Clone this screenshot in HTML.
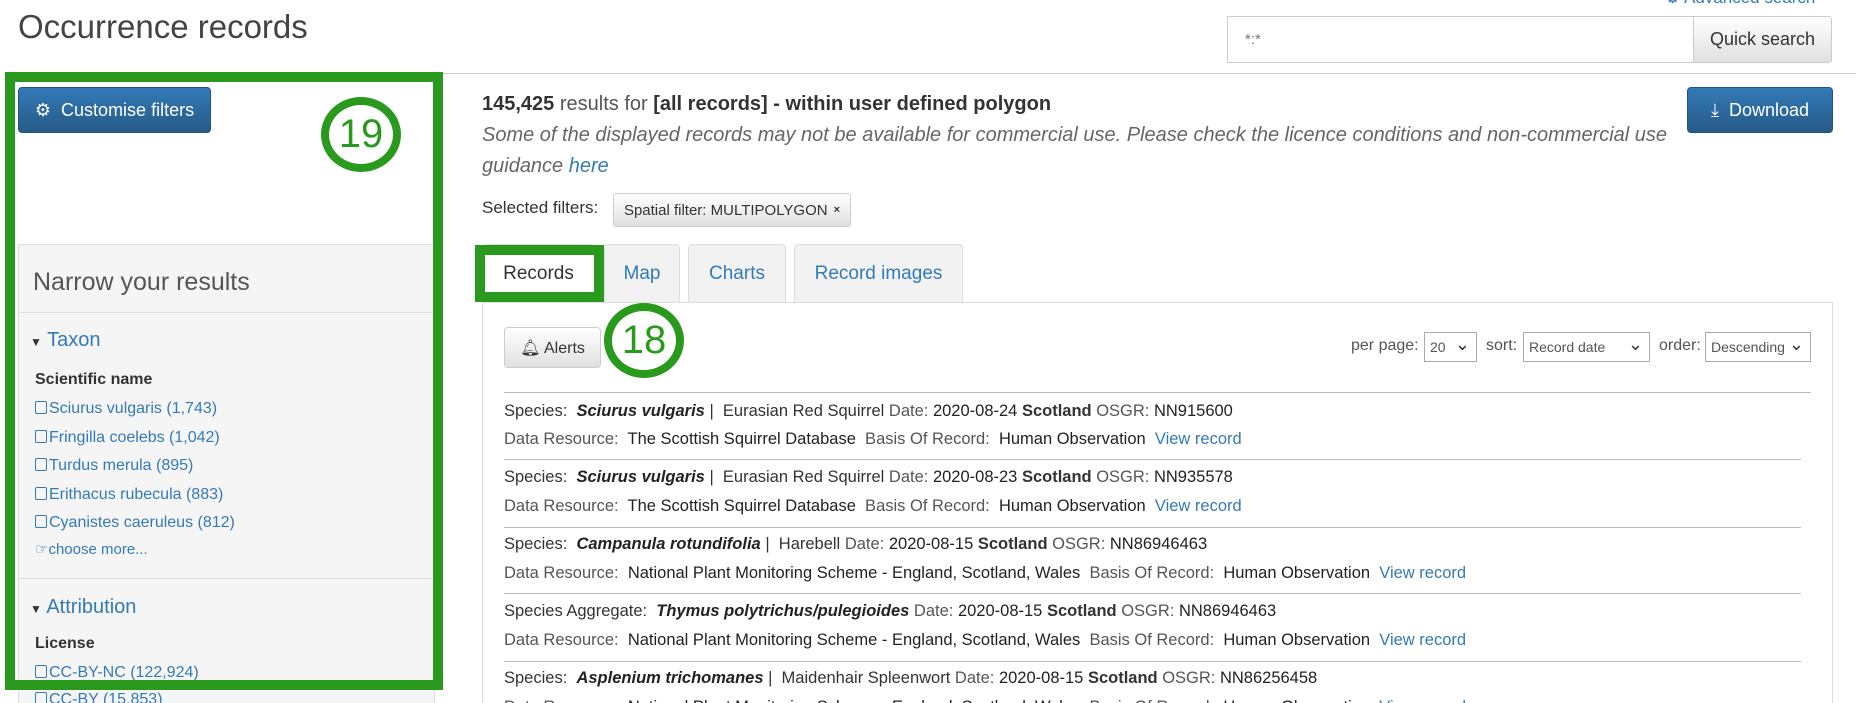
<!DOCTYPE html>
<html><head><meta charset="utf-8">
<style>
*{box-sizing:border-box;margin:0;padding:0}
html,body{width:1856px;height:703px;overflow:hidden;background:#fff}
body{font-family:"Liberation Sans",Arial,sans-serif;color:#333}
#w{position:relative;width:1856px;height:703px;overflow:hidden}
.a{position:absolute;white-space:nowrap}
.blue{color:#337ab7}
.btnb{position:absolute;background:linear-gradient(#337ab7,#265a88);border:1px solid #245580;border-radius:4px;color:#fff;font-size:18px;display:flex;align-items:center;justify-content:center}
.btng{position:absolute;background:linear-gradient(#fff,#e0e0e0);border:1px solid #ccc;border-radius:4px;color:#333;display:flex;align-items:center;justify-content:center}
.green{position:absolute;border:10px solid #2a9a1e}
.circ{position:absolute;border:8px solid #2a9a1e;border-radius:50%;color:#2a9a1e;display:flex;align-items:center;justify-content:center;font-size:40px;background:#fff}
.sel{position:absolute;border:1px solid #aaa;background:#fff;font-size:14px;color:#555;padding-left:5px;display:flex;align-items:center;top:332px;height:30px}
.sel:after{content:"⌄";position:absolute;right:6px;top:1px;font-size:18px;color:#333}
.hr{position:absolute;height:1px;background:#ccc}
.row{position:absolute;left:504px;font-size:16.5px;color:#555}
.row b{color:#333;font-weight:normal}
.row i{color:#222;font-weight:bold}
.row .d{color:#222}
.item{position:absolute;left:35px;font-size:16px;color:#337ab7}
.cb{display:inline-block;width:12px;height:13px;border:1.5px solid #337ab7;border-radius:2px;margin-right:2px;vertical-align:-1px}
.tab{position:absolute;top:244px;height:58px;border:1px solid #ddd;border-bottom:none;border-radius:4px 4px 0 0;background:#f2f2f2;color:#337ab7;font-size:19px;display:flex;align-items:center;justify-content:center}
</style></head><body><div id="w">
<div class="a" style="left:18px;top:8px;font-size:33px;color:#444">Occurrence records</div>
<div class="a blue" style="left:1665px;top:-12px;font-size:17px">⚙ Advanced search</div>
<div class="a" style="left:1227px;top:16px;width:467px;height:47px;border:1px solid #ccc;border-right:none;font-size:15px;color:#777;padding:14px 0 0 17px">*:*</div>
<div class="btng" style="left:1693px;top:16px;width:139px;height:47px;border-radius:0 3px 3px 0;font-size:18px">Quick search</div>
<div class="hr" style="left:443px;top:73px;width:1413px"></div>

<div class="btnb" style="left:18px;top:87px;width:193px;height:46px">⚙&nbsp; Customise filters</div>
<div class="a" style="left:18px;top:244px;width:417px;height:500px;background:#f5f5f5;border:1px solid #ddd"></div>
<div class="a" style="left:33px;top:268px;font-size:25px;color:#555">Narrow your results</div>
<div class="hr" style="left:18px;top:312px;width:417px;background:#ddd"></div>
<div class="a blue" style="left:30px;top:329px;font-size:20px"><span style="font-size:12px;color:#333">▼</span> Taxon</div>
<div class="a" style="left:35px;top:371px;font-size:16px;font-weight:bold;color:#333">Scientific name</div>
<div class="item" style="top:400px"><span class="cb"></span>Sciurus vulgaris (1,743)</div>
<div class="item" style="top:429px"><span class="cb"></span>Fringilla coelebs (1,042)</div>
<div class="item" style="top:457px"><span class="cb"></span>Turdus merula (895)</div>
<div class="item" style="top:486px"><span class="cb"></span>Erithacus rubecula (883)</div>
<div class="item" style="top:514px"><span class="cb"></span>Cyanistes caeruleus (812)</div>
<div class="item" style="top:540px;font-size:15px">☞choose more...</div>
<div class="hr" style="left:18px;top:578px;width:417px;background:#ddd"></div>
<div class="a blue" style="left:30px;top:596px;font-size:20px"><span style="font-size:12px;color:#333">▼</span> Attribution</div>
<div class="a" style="left:35px;top:635px;font-size:16px;font-weight:bold;color:#333">License</div>
<div class="item" style="top:664px"><span class="cb"></span>CC-BY-NC (122,924)</div>
<div class="item" style="top:691px"><span class="cb"></span>CC-BY (15,853)</div>
<div class="green" style="left:5px;top:72px;width:438px;height:618px"></div>
<div class="circ" style="left:321px;top:97px;width:80px;height:75px">19</div>

<div class="a" style="left:482px;top:93px;font-size:20px;color:#555"><b style="color:#333">145,425</b> results for <b style="color:#333">[all records] - within user defined polygon</b></div>
<div class="a" style="left:482px;top:124px;font-size:20px;font-style:italic;color:#666">Some of the displayed records may not be available for commercial use. Please check the licence conditions and non-commercial use</div>
<div class="a" style="left:482px;top:155px;font-size:20px;font-style:italic;color:#666">guidance <span class="blue">here</span></div>
<div class="btnb" style="left:1687px;top:87px;width:146px;height:46px">⤓&nbsp; Download</div>
<div class="a" style="left:482px;top:198px;font-size:17px;color:#333">Selected filters:</div>
<div class="btng" style="left:613px;top:193px;width:238px;height:34px;font-size:15px;border-radius:3px">Spatial filter: MULTIPOLYGON <b style="font-size:11px;margin-left:6px">×</b></div>

<div class="a" style="left:482px;top:302px;width:1351px;height:460px;border:1px solid #ddd"></div>
<div class="tab" style="left:482px;width:113px;background:#fff;color:#333">Records</div>
<div class="tab" style="left:604px;width:76px">Map</div>
<div class="tab" style="left:688px;width:98px">Charts</div>
<div class="tab" style="left:794px;width:169px">Record images</div>
<div class="green" style="left:475px;top:245px;width:129px;height:57px"></div>

<div class="btng" style="left:504px;top:327px;width:97px;height:41px;font-size:16px">🔔︎ Alerts</div>
<div class="circ" style="left:604px;top:303px;width:80px;height:75px">18</div>
<div class="a" style="left:1351px;top:337px;font-size:16px;color:#555">per page:</div>
<div class="sel" style="left:1424px;width:53px">20</div>
<div class="a" style="left:1486px;top:337px;font-size:16px;color:#555">sort:</div>
<div class="sel" style="left:1523px;width:127px">Record date</div>
<div class="a" style="left:1659px;top:337px;font-size:16px;color:#555">order:</div>
<div class="sel" style="left:1705px;width:106px">Descending</div>

<div class="hr" style="left:504px;top:392px;width:1307px;background:#bbb"></div>
<div class="row" style="top:402px"><b>Species:</b>&nbsp; <i>Sciurus vulgaris</i><b> | &nbsp;Eurasian Red Squirrel</b> Date: <span class="d">2020-08-24</span> <b style="font-weight:bold">Scotland</b> OSGR: <span class="d">NN915600</span></div>
<div class="row" style="top:430px">Data Resource:&nbsp; <span class="d">The Scottish Squirrel Database</span>&nbsp; Basis Of Record:&nbsp; <span class="d">Human Observation</span>&nbsp; <span class="blue">View record</span></div>
<div class="hr" style="left:504px;top:459px;width:1297px;background:#bbb"></div>
<div class="row" style="top:468px"><b>Species:</b>&nbsp; <i>Sciurus vulgaris</i><b> | &nbsp;Eurasian Red Squirrel</b> Date: <span class="d">2020-08-23</span> <b style="font-weight:bold">Scotland</b> OSGR: <span class="d">NN935578</span></div>
<div class="row" style="top:497px">Data Resource:&nbsp; <span class="d">The Scottish Squirrel Database</span>&nbsp; Basis Of Record:&nbsp; <span class="d">Human Observation</span>&nbsp; <span class="blue">View record</span></div>
<div class="hr" style="left:504px;top:527px;width:1297px;background:#bbb"></div>
<div class="row" style="top:535px"><b>Species:</b>&nbsp; <i>Campanula rotundifolia</i><b> | &nbsp;Harebell</b> Date: <span class="d">2020-08-15</span> <b style="font-weight:bold">Scotland</b> OSGR: <span class="d">NN86946463</span></div>
<div class="row" style="top:564px">Data Resource:&nbsp; <span class="d">National Plant Monitoring Scheme - England, Scotland, Wales</span>&nbsp; Basis Of Record:&nbsp; <span class="d">Human Observation</span>&nbsp; <span class="blue">View record</span></div>
<div class="hr" style="left:504px;top:593px;width:1297px;background:#bbb"></div>
<div class="row" style="top:602px"><b>Species Aggregate:</b>&nbsp; <i>Thymus polytrichus/pulegioides</i> Date: <span class="d">2020-08-15</span> <b style="font-weight:bold">Scotland</b> OSGR: <span class="d">NN86946463</span></div>
<div class="row" style="top:631px">Data Resource:&nbsp; <span class="d">National Plant Monitoring Scheme - England, Scotland, Wales</span>&nbsp; Basis Of Record:&nbsp; <span class="d">Human Observation</span>&nbsp; <span class="blue">View record</span></div>
<div class="hr" style="left:504px;top:661px;width:1297px;background:#bbb"></div>
<div class="row" style="top:669px"><b>Species:</b>&nbsp; <i>Asplenium trichomanes</i><b> | &nbsp;Maidenhair Spleenwort</b> Date: <span class="d">2020-08-15</span> <b style="font-weight:bold">Scotland</b> OSGR: <span class="d">NN86256458</span></div>
<div class="row" style="top:698px">Data Resource:&nbsp; <span class="d">National Plant Monitoring Scheme - England, Scotland, Wales</span>&nbsp; Basis Of Record:&nbsp; <span class="d">Human Observation</span>&nbsp; <span class="blue">View record</span></div>
</div></body></html>
